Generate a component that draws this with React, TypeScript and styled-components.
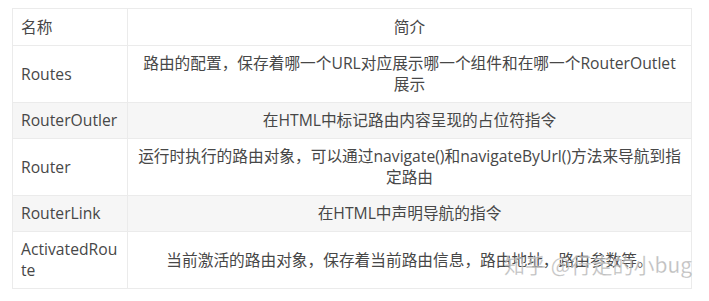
import React from 'react';
import styled, { createGlobalStyle } from 'styled-components';

interface RouteRow {
  name: string;
  desc: React.ReactNode;
}

const rows: RouteRow[] = [
  {
    name: 'Routes',
    desc: (
      <>
        路由的配置，保存着哪一个URL对应展示哪一个组件和在哪一个RouterOutlet
        <br />
        展示
      </>
    ),
  },
  { name: 'RouterOutler', desc: '在HTML中标记路由内容呈现的占位符指令' },
  {
    name: 'Router',
    desc: (
      <>
        运行时执行的路由对象，可以通过navigate()和navigateByUrl()方法来导航到指
        <br />
        定路由
      </>
    ),
  },
  { name: 'RouterLink', desc: '在HTML中声明导航的指令' },
  { name: 'ActivatedRoute', desc: '当前激活的路由对象，保存着当前路由信息，路由地址，路由参数等。' },
];

const App: React.FC = () => {
  return (
    <Page>
      <GlobalStyle />
      <Table>
        <colgroup>
          <col style={{ width: 115 }} />
          <col />
        </colgroup>
        <thead>
          <Row>
            <HeadCell>名称</HeadCell>
            <HeadCell $center>简介</HeadCell>
          </Row>
        </thead>
        <tbody>
          {rows.map((row, i) => (
            <Row key={row.name} $striped={i % 2 === 1}>
              <NameCell>{row.name}</NameCell>
              <DescCell>{row.desc}</DescCell>
            </Row>
          ))}
        </tbody>
      </Table>
      <Watermark>知乎 @行走的小bug</Watermark>
    </Page>
  );
};

const GlobalStyle = createGlobalStyle`
  html, body {
    margin: 0;
    padding: 0;
    background: #ffffff;
  }
  body {
    font-family: "Open Sans", "Noto Sans CJK SC", sans-serif;
    color: #474747;
  }
`;

const Page = styled.div`
  position: relative;
  width: 709px;
  height: 301px;
  padding: 8px 17px 0 12px;
  box-sizing: border-box;
  overflow: hidden;
`;

const Table = styled.table`
  width: 680px;
  border-collapse: collapse;
  table-layout: fixed;
  font-size: 15.7px;
  line-height: 21px;
`;

const Row = styled.tr<{ $striped?: boolean }>`
  background: ${props => (props.$striped ? '#f6f6f6' : '#ffffff')};
`;

const HeadCell = styled.th<{ $center?: boolean }>`
  border: 1px solid #ebebeb;
  padding: 7px 8px;
  font-weight: 400;
  text-align: ${props => (props.$center ? 'center' : 'left')};
  height: 22px;
`;

const NameCell = styled.td`
  border: 1px solid #ebebeb;
  padding: 7px 8px;
  word-break: break-all;
  vertical-align: middle;
`;

const DescCell = styled.td`
  border: 1px solid #ebebeb;
  padding: 7px 8px;
  text-align: center;
  vertical-align: middle;
`;

const Watermark = styled.div`
  position: absolute;
  left: 504px;
  top: 250px;
  font-size: 21px;
  line-height: 28px;
  color: rgba(170, 170, 170, 0.75);
  -webkit-text-stroke: 0.4px rgba(255, 255, 255, 0.6);
  font-family: "Noto Sans CJK SC", "Open Sans", sans-serif;
  white-space: nowrap;
`;

export default App;
